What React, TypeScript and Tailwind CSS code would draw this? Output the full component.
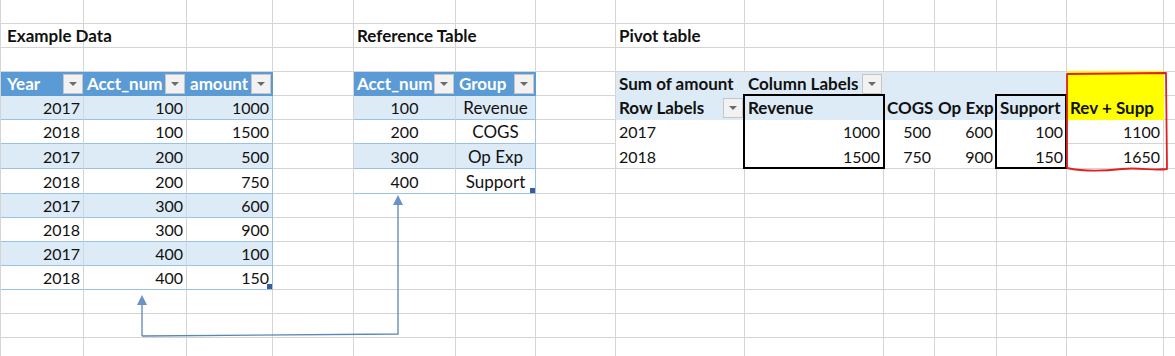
import clsx from "clsx";

type Cell = {
  t?: string;
  a?: "l" | "r" | "c";
  b?: boolean;
  k?: string; // bg + border colours
  dd?: boolean; // filter dropdown button
  fh?: boolean; // table resize handle
};

const NCOLS = 14;
const NROWS = 15;

// table styles
const HDR = "bg-[#5b9bd5] border-[#5b9bd5] text-white font-bold";
const BAND = "bg-[#ddebf7] border-b-[#9bc2e6] border-r-[#d0d7e5]";
const BAND_END = "bg-[#ddebf7] border-[#9bc2e6]";
const PLAIN = "bg-white border-b-[#9bc2e6] border-r-[#d4d4d4]";
const PLAIN_END = "bg-white border-[#9bc2e6]";
// pivot styles
const PV_HEAD = "bg-[#ddebf7] border-[#ddebf7] font-bold";
const PV_ROW = "bg-white border-white";
const PV_LAST = "bg-white border-r-white border-b-[#d4d4d4]";
const YELLOW = "bg-[#ffff00] border-[#ffff00] font-bold";

const cells: Record<string, Cell> = {
  "1-0": { t: "Example Data", b: true },
  "1-4": { t: "Reference Table", b: true },
  "1-7": { t: "Pivot table", b: true },
  "2-12": { k: "border-r-[#d4d4d4] border-b-[#ffff00]" },

  "3-0": { t: "Year", k: HDR, dd: true },
  "3-1": { t: "Acct_num", k: HDR, dd: true },
  "3-2": { t: "amount", k: HDR, dd: true },
  "3-4": { t: "Acct_num", k: HDR, dd: true },
  "3-5": { t: "Group", k: HDR, dd: true },
  "3-7": { t: "Sum of amount", k: PV_HEAD },
  "3-8": { t: "Column Labels", k: PV_HEAD, dd: true },
  "3-9": { k: PV_HEAD },
  "3-10": { k: PV_HEAD },
  "3-11": { k: PV_HEAD },
  "3-12": { k: YELLOW },

  "4-7": { t: "Row Labels", k: PV_HEAD, dd: true },
  "4-8": { t: "Revenue", k: PV_HEAD },
  "4-9": { t: "COGS", k: PV_HEAD },
  "4-10": { t: "Op Exp", k: PV_HEAD },
  "4-11": { t: "Support", k: PV_HEAD },
  "4-12": { t: "Rev + Supp", k: YELLOW },

  "5-7": { t: "2017", k: PV_ROW },
  "5-8": { t: "1000", a: "r", k: PV_ROW },
  "5-9": { t: "500", a: "r", k: PV_ROW },
  "5-10": { t: "600", a: "r", k: PV_ROW },
  "5-11": { t: "100", a: "r", k: PV_ROW },
  "5-12": { t: "1100", a: "r" },

  "6-7": { t: "2018", k: PV_LAST },
  "6-8": { t: "1500", a: "r", k: PV_LAST },
  "6-9": { t: "750", a: "r", k: PV_LAST },
  "6-10": { t: "900", a: "r", k: PV_LAST },
  "6-11": { t: "150", a: "r", k: PV_LAST },
  "6-12": { t: "1650", a: "r" },
};

// example data rows
const example = [
  ["2017", "100", "1000"],
  ["2018", "100", "1500"],
  ["2017", "200", "500"],
  ["2018", "200", "750"],
  ["2017", "300", "600"],
  ["2018", "300", "900"],
  ["2017", "400", "100"],
  ["2018", "400", "150"],
];
example.forEach((row, i) => {
  const band = i % 2 === 0;
  row.forEach((v, c) => {
    const last = c === 2;
    cells[`${4 + i}-${c}`] = {
      t: v,
      a: "r",
      k: band ? (last ? BAND_END : BAND) : last ? PLAIN_END : PLAIN,
      fh: last && i === example.length - 1,
    };
  });
});

// reference table rows
const reference = [
  ["100", "Revenue"],
  ["200", "COGS"],
  ["300", "Op Exp"],
  ["400", "Support"],
];
reference.forEach((row, i) => {
  const band = i % 2 === 0;
  row.forEach((v, c) => {
    const last = c === 1;
    cells[`${4 + i}-${4 + c}`] = {
      t: v,
      a: "c",
      k: band ? (last ? BAND_END : BAND) : last ? PLAIN_END : PLAIN,
      fh: last && i === reference.length - 1,
    };
  });
});

function Dropdown() {
  return (
    <span className="mb-[1px] flex h-[20px] w-[20px] shrink-0 items-center justify-center border border-[#c6c6c6] bg-[#f2f2f2]">
      <span className="h-0 w-0 border-x-[4px] border-t-[4px] border-x-transparent border-t-[#6b6b6b]" />
    </span>
  );
}

function SheetCell({ cell, col }: { cell?: Cell; col: number }) {
  const c = cell ?? {};
  const align = c.a ?? "l";
  // Lato digits run wide, letters run narrow next to Calibri
  const numeric = c.t ? /^\d+$/.test(c.t) : false;
  return (
    <div
      className={clsx(
        "relative flex items-end overflow-visible whitespace-nowrap border-r border-b leading-none",
        numeric ? "text-[16px]" : "text-[17px]",
        c.k ?? "border-[#d4d4d4]",
        c.b && "font-bold",
        c.dd && "justify-between",
        !c.dd && align === "r" && "justify-end pr-[3px]",
        !c.dd && align === "c" && "justify-center",
        align === "l" && (col === 0 ? "pl-[6px]" : "pl-[3px]"),
        c.dd && col !== 0 && "pr-[1px]"
      )}
    >
      {c.t && <span className="pb-[3px]">{c.t}</span>}
      {c.dd && <Dropdown />}
      {c.fh && <span className="absolute right-0 bottom-0 h-[5px] w-[5px] bg-[#3b5c9c]" />}
    </div>
  );
}

export default function App() {
  const grid = [];
  for (let r = 0; r < NROWS; r++) {
    for (let c = 0; c < NCOLS; c++) {
      grid.push(<SheetCell key={`${r}-${c}`} cell={cells[`${r}-${c}`]} col={c} />);
    }
  }

  return (
    <div className="relative h-[356px] w-[1175px] overflow-hidden bg-white font-['Lato',sans-serif] text-[16px] text-[#111]">
      <div className="grid grid-cols-[83px_103px_86px_81px_102px_80px_80px_129px_139px_51px_62px_70px_97px_120px] grid-rows-[24px_24px_24px_24px_24px_24px_25px_25px_24px_24px_24px_24px_24px_24px_24px] border-l border-[#d4d4d4]">
        {grid}
      </div>

      {/* hand-drawn boxes around pivot columns */}
      <div className="pointer-events-none absolute top-[94px] left-[743px] h-[75px] w-[142px] border-2 border-black" />
      <div className="pointer-events-none absolute top-[94px] left-[995px] h-[75px] w-[72px] border-2 border-black" />

      <svg className="pointer-events-none absolute top-0 left-0" width="1175" height="356">
        {/* red outline round Rev + Supp */}
        <path
          d="M1067 74 L1166 73 L1167 169 C1152 171 1140 167 1122 169 C1104 171 1086 172 1067 168 Z"
          fill="none"
          stroke="#e02020"
          strokeWidth="1.8"
          strokeLinejoin="round"
        />
        {/* connector arrows */}
        <g stroke="#5b86b8" strokeWidth="1.3" fill="none">
          <path d="M142 336 L142 304" />
          <path d="M142 336 L398 334 L398 204" />
        </g>
        <g fill="#6a92c4">
          <path d="M137 305 L147 305 L142 295 Z" />
          <path d="M393 205 L403 205 L398 195 Z" />
        </g>
      </svg>
    </div>
  );
}
